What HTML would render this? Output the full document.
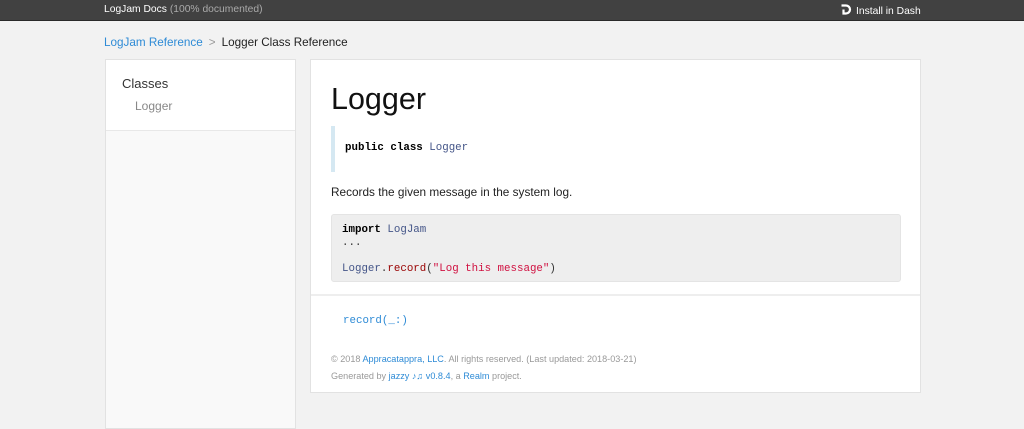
<!DOCTYPE html>
<html><head><meta charset="utf-8"><style>
*{margin:0;padding:0;box-sizing:border-box}
body{width:1024px;height:416px;overflow:hidden;background:#f2f2f2;font-family:"Liberation Sans",Helvetica,Arial,sans-serif;position:relative;color:#333}
.hdr{position:absolute;left:0;top:0;width:1024px;height:21px;background:#414141;border-bottom:1px solid #2a2a2a}
.hdr .t{position:absolute;left:104px;top:4px;font-size:10.3px;color:#fff}
.hdr .t span{color:#aaa}
.hdr .d{position:absolute;left:841px;top:4px;font-size:10.3px;color:#fff}
.bc{position:absolute;left:104px;top:36px;font-size:11.7px;color:#222}
.bc a{color:#2e8bd6;text-decoration:none}
.bc .sep{color:#999;margin:0 6px}
.side{position:absolute;left:105px;top:59px;width:191px;height:370px;background:#f9f9f9;border:1px solid #e2e2e2}
.side .top{background:#fff;height:71px;border-bottom:1px solid #e8e8e8;padding:16px 0 0 16px}
.side .c{font-size:13px;color:#333}
.side .l{font-size:12px;color:#888;margin:8px 0 0 13px}
.main{position:absolute;left:310px;top:59px;width:611px;height:334px;background:#fff;border:1px solid #e2e2e2}
h1{position:absolute;left:20px;top:22px;font-size:30.5px;font-weight:normal;color:#111}
.bq{position:absolute;left:20px;top:66px;width:4px;height:46px;background:#d5e8f2}
.mono{font-family:"Liberation Mono",Menlo,monospace;font-size:10.8px}
.decl{position:absolute;left:34px;top:82px}
.kw{font-weight:bold;color:#000}
.ty{color:#445588}
.p{position:absolute;left:20px;top:125px;font-size:11.8px;color:#222}
.code{position:absolute;left:20px;top:154px;width:570px;height:68px;background:#eee;border:1px solid #e4e4e4;border-radius:3px;padding:9px 10px;line-height:13px}
.s{color:#d01040}
.fn{color:#990000}
.hr{position:absolute;left:0;top:234px;width:609px;height:2px;background:#eee}
.rec{position:absolute;left:32px;top:255px;color:#2e8bd6}
.f{position:absolute;left:20px;font-size:9.1px;color:#999}
.f a{color:#2e8bd6;text-decoration:none}
</style></head><body>
<div class="hdr"><div class="t">LogJam Docs <span>(100% documented)</span></div>
<div class="d"><svg width="11" height="11" viewBox="0 0 11 11" style="vertical-align:-1px;margin-right:4px"><path d="M0.5 1.5H5A4 4 0 0 1 5 9.5H2.5V5.5" fill="none" stroke="#fff" stroke-width="2.2"/></svg>Install in Dash</div></div>
<div class="bc"><a>LogJam Reference</a><span class="sep">&gt;</span>Logger Class Reference</div>
<div class="side"><div class="top"><div class="c">Classes</div><div class="l">Logger</div></div></div>
<div class="main">
<h1>Logger</h1>
<div class="bq"></div>
<div class="decl mono"><span class="kw">public</span> <span class="kw">class</span> <span class="ty">Logger</span></div>
<div class="p">Records the given message in the system log.</div>
<div class="code mono"><span class="kw">import</span> <span class="ty">LogJam</span><br>...<br><br><span class="ty">Logger</span>.<span class="fn">record</span>(<span class="s">"Log this message"</span>)</div>
<div class="hr"></div>
<div class="rec mono">record(_:)</div>
<div class="f" style="top:294px">© 2018 <a>Appracatappra, LLC</a>. All rights reserved. (Last updated: 2018-03-21)</div>
<div class="f" style="top:311px">Generated by <a>jazzy ♪♫ v0.8.4</a>, a <a>Realm</a> project.</div>
</div>
</body></html>
